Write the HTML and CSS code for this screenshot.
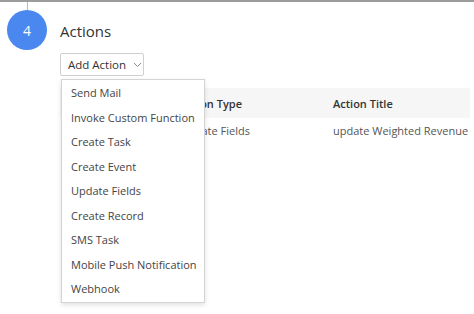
FILE: index.html
```html
<!DOCTYPE html>
<html lang="en">
<head>
    <meta charset="UTF-8">
    <title>Actions</title>
    <link rel="stylesheet" href="styles.css">
</head>
<body>
    <div class="topbar"></div>
    <div class="step">
        <div class="rail">
            <div class="line"></div>
            <div class="badge">4</div>
        </div>
        <div class="content">
            <h2 class="title">Actions</h2>
            <div class="picker">
                <button class="add-btn">Add Action
                    <svg width="9" height="6" viewBox="0 0 9 6"><path d="M1 1l3.5 3.5L8 1" fill="none" stroke="#888" stroke-width="1"/></svg>
                </button>
                <ul class="menu">
                    <li>Send Mail</li>
                    <li>Invoke Custom Function</li>
                    <li>Create Task</li>
                    <li>Create Event</li>
                    <li>Update Fields</li>
                    <li>Create Record</li>
                    <li>SMS Task</li>
                    <li>Mobile Push Notification</li>
                    <li>Webhook</li>
                </ul>
            </div>
            <table class="actions">
                <tr>
                    <th class="c1">Name</th>
                    <th class="c2">Action Type</th>
                    <th>Action Title</th>
                </tr>
                <tr>
                    <td class="c1">Field Update</td>
                    <td class="c2">Update Fields</td>
                    <td>update Weighted Revenue</td>
                </tr>
            </table>
        </div>
    </div>
</body>
</html>
```

FILE: styles.css
```css
body {
    margin: 0;
    font-family: "Open Sans", Arial, sans-serif;
    background: #fff;
    color: #333;
    width: 474px;
    height: 314px;
    overflow: hidden;
}

.topbar {
    height: 2px;
    background: #9c9c9c;
}

.step {
    display: flex;
}

.rail {
    width: 40px;
    padding-left: 7px;
    margin-right: 13px;
    display: flex;
    flex-direction: column;
    align-items: center;
}

.line {
    width: 1px;
    height: 8px;
    background: #bbb;
}

.badge {
    width: 40px;
    height: 40px;
    border-radius: 50%;
    background: #4a88ef;
    color: #fff;
    font-size: 14px;
    display: flex;
    align-items: center;
    justify-content: center;
}

.content {
    flex: 1;
    position: relative;
}

.title {
    margin: 18px 0 0;
    font-size: 15px;
    font-weight: normal;
    line-height: 22px;
    color: #333;
}

.picker {
    position: relative;
    margin-top: 11px;
    height: 23px;
}

.add-btn {
    height: 23px;
    width: 84px;
    padding: 0 0 0 7px;
    border: 1px solid #cfcfcf;
    border-radius: 2px;
    background: #fff;
    font-family: inherit;
    font-size: 11.5px;
    color: #333;
    display: flex;
    align-items: center;
    gap: 7px;
    white-space: nowrap;
}

.menu {
    position: absolute;
    top: 26px;
    left: 1px;
    z-index: 2;
    width: 142px;
    margin: 0;
    padding: 1px 0 0;
    list-style: none;
    background: #fff;
    border: 1px solid #d4d4d4;
    box-shadow: 0 2px 5px rgba(0, 0, 0, 0.12);
}

.menu li {
    padding: 0 9px;
    height: 24.5px;
    line-height: 24.5px;
    font-size: 11px;
    color: #444;
    white-space: nowrap;
}

.actions {
    margin-top: 12px;
    width: 410px;
    table-layout: fixed;
    border-collapse: collapse;
    font-size: 11px;
    white-space: nowrap;
}

.actions th {
    background: #f6f6f6;
    height: 30px;
    text-align: left;
    font-weight: 600;
    padding: 0;
    color: #333;
}

.actions td {
    height: 25px;
    color: #555;
    padding: 0;
}

.actions .c1 {
    width: 110px;
    padding-left: 10px;
}

.actions .c2 {
    width: 153px;
}
```
